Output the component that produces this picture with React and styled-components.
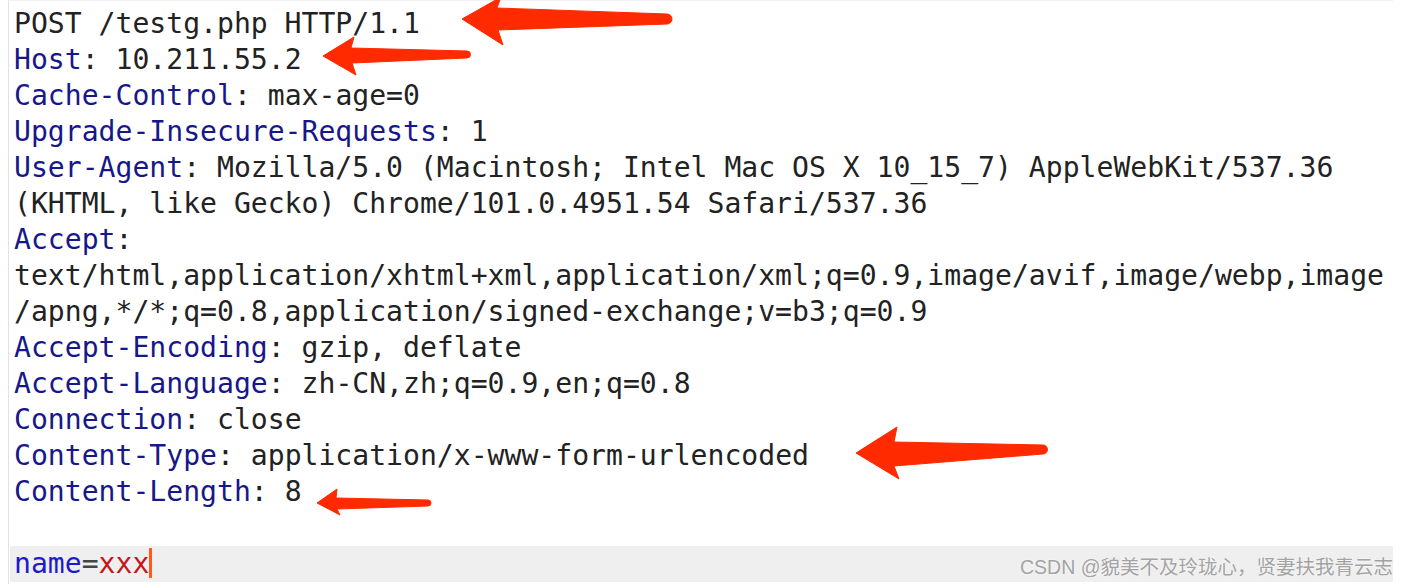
import React from "react";
import styled, { createGlobalStyle } from "styled-components";

const GlobalStyle = createGlobalStyle`
  html, body {
    margin: 0;
    padding: 0;
    background: #ffffff;
  }
`;

const Page = styled.div`
  position: relative;
  width: 1410px;
  height: 584px;
  overflow: hidden;
  background: #ffffff;
`;

const Editor = styled.div`
  margin-left: 8px;
  width: 1385px;
  height: 584px;
  box-sizing: border-box;
  padding-top: 5px;
  border-left: 1px solid #e2e2e2;
  border-top: 1px solid #f2f2f2;
  font-family: "DejaVu Sans Mono", "Liberation Mono", monospace;
  font-size: 28.1px;
  line-height: 36px;
  color: #222222;
`;

const Line = styled.div`
  height: 36px;
  margin-left: 1px;
  padding-left: 4px;
  white-space: pre;
  background: ${(p) => (p.$active ? "#efefef" : "transparent")};
`;

const Key = styled.span`
  color: #17178a;
`;

const Param = styled.span`
  color: #1c1cc8;
`;

const Eq = styled.span`
  color: #444444;
`;

const Val = styled.span`
  color: #c4161c;
`;

const Caret = styled.span`
  display: inline-block;
  width: 3px;
  height: 30px;
  vertical-align: -5px;
  background: #ff5a1a;
`;

const Arrows = styled.svg`
  position: absolute;
  left: 0;
  top: 0;
  width: 1410px;
  height: 584px;
  pointer-events: none;
`;

const Watermark = styled.div`
  position: absolute;
  right: 17px;
  bottom: 5px;
  font-family: "Liberation Sans", "Noto Sans CJK SC", sans-serif;
  font-size: 19.5px;
  line-height: 24px;
  color: #a3a3a3;
  text-shadow: 0 0 2px #ffffff;
  white-space: nowrap;
`;

const headers = [
  [null, "POST /testg.php HTTP/1.1"],
  ["Host", " 10.211.55.2"],
  ["Cache-Control", " max-age=0"],
  ["Upgrade-Insecure-Requests", " 1"],
  ["User-Agent", " Mozilla/5.0 (Macintosh; Intel Mac OS X 10_15_7) AppleWebKit/537.36"],
  [null, "(KHTML, like Gecko) Chrome/101.0.4951.54 Safari/537.36"],
  ["Accept", ""],
  [null, "text/html,application/xhtml+xml,application/xml;q=0.9,image/avif,image/webp,image"],
  [null, "/apng,*/*;q=0.8,application/signed-exchange;v=b3;q=0.9"],
  ["Accept-Encoding", " gzip, deflate"],
  ["Accept-Language", " zh-CN,zh;q=0.9,en;q=0.8"],
  ["Connection", " close"],
  ["Content-Type", " application/x-www-form-urlencoded"],
  ["Content-Length", " 8"]
];

// tapered hand-drawn style arrows pointing left
const arrowPaths = [
  "M462,19 L501,-3 L497,8 L667,14 A5,5 0 0 1 667,24 L498,30 L503,45 Z",
  "M323,56 L354,37 L351,48 L467,51 A3.5,3.5 0 0 1 467,58 L352,63 L356,75 Z",
  "M856,453 L897,427 L894,442 L1043,445 A4.5,4.5 0 0 1 1043,454 L894,466 L899,479 Z",
  "M317,503 L337,489 L336,498 L428,500 A3,3 0 0 1 428,506 L337,509 L340,515 Z"
];

const App = () => {
  return (
    <Page>
      <GlobalStyle />
      <Editor>
        {headers.map(([key, value], i) => (
          <Line key={i}>
            {key && <Key>{key}</Key>}
            {key && ":"}
            {value}
          </Line>
        ))}
        <Line />
        <Line $active>
          <Param>name</Param>
          <Eq>=</Eq>
          <Val>xxx</Val>
          <Caret />
        </Line>
      </Editor>
      <Arrows viewBox="0 0 1410 584">
        {arrowPaths.map((d, i) => (
          <path key={i} d={d} fill="#ff2a00" stroke="#ff2a00" strokeWidth="1" strokeLinejoin="round" />
        ))}
      </Arrows>
      <Watermark>CSDN @貌美不及玲珑心，贤妻扶我青云志</Watermark>
    </Page>
  );
};

export default App;
